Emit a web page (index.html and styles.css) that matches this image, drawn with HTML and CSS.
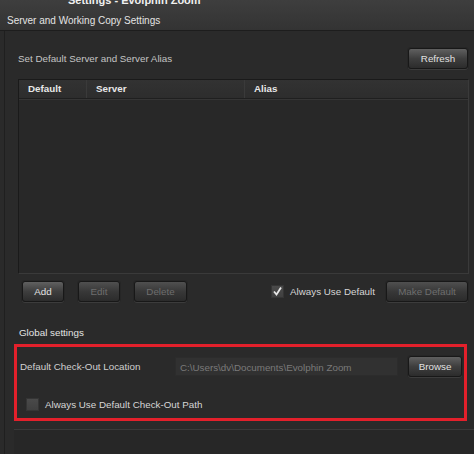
FILE: index.html
```html
<!DOCTYPE html>
<html lang="en">
<head>
  <meta charset="UTF-8">
  <title>Settings - Evolphin Zoom</title>
  <link rel="stylesheet" href="styles.css">
</head>
<body>

  <div class="header">
    <div class="title">Settings - Evolphin Zoom</div>
    <div class="section-label">Server and Working Copy Settings</div>
  </div>

  <div class="panel">
    <div class="row server-row">
      <span class="label">Set Default Server and Server Alias</span>
      <button class="btn refresh">Refresh</button>
    </div>

    <div class="table">
      <div class="thead">
        <div class="col col-default">Default</div>
        <div class="col col-server">Server</div>
        <div class="col col-alias">Alias</div>
      </div>
      <div class="tbody"></div>
    </div>

    <div class="row actions">
      <button class="btn add">Add</button>
      <button class="btn edit" disabled>Edit</button>
      <button class="btn delete" disabled>Delete</button>
      <label class="check always-default">
        <span class="box checked">
          <svg width="11" height="11" viewBox="0 0 11 11"><path d="M2 5.5 L4.5 8.5 L9 1.5" fill="none" stroke="#e8e8e8" stroke-width="1.8"/></svg>
        </span>
        Always Use Default
      </label>
      <button class="btn make-default" disabled>Make Default</button>
    </div>

    <div class="group-label">Global settings</div>

    <div class="global">
      <div class="row location">
        <span class="label">Default Check-Out Location</span>
        <div class="field">C:\Users\dv\Documents\Evolphin Zoom</div>
        <button class="btn browse">Browse</button>
      </div>
      <label class="check path">
        <span class="box"></span>
        Always Use Default Check-Out Path
      </label>
    </div>

    <div class="footer"></div>
  </div>

</body>
</html>
```

FILE: styles.css
```css
html, body {
  margin: 0;
  padding: 0;
  background: #2a2a2a;
  color: #d8d8d8;
  font-family: "Liberation Sans", Arial, sans-serif;
  font-size: 9.8px;
  width: 474px;
  height: 454px;
  overflow: hidden;
}

.header {
  display: flow-root;
  height: 30px;
  background: linear-gradient(#3e3e3e, #333333);
  border-bottom: 1px solid #1d1d1d;
  padding: 0 7px;
}
.title {
  margin-top: -6px;
  margin-left: 61px;
  height: 12px;
  line-height: 12px;
  font-weight: bold;
  font-size: 11px;
  color: #f0f0f0;
}
.section-label {
  margin-top: 8px;
  line-height: 14px;
  font-size: 10px;
  color: #e4e4e4;
}

.panel {
  margin-left: 4px;
  height: 423px;
  border-left: 1px solid #1f1f1f;
  background: #2a2a2a;
  padding-top: 17px;
  box-sizing: border-box;
}

.row {
  display: flex;
  align-items: center;
}
.server-row {
  justify-content: space-between;
  padding: 0 6px 0 13px;
}
.label {
  color: #c4c4c4;
}

.btn {
  font: inherit;
  height: 21px;
  padding: 0;
  border: 1px solid #181818;
  border-radius: 3px;
  background: linear-gradient(#606060, #3e3e3e 50%, #2c2c2c);
  color: #e2e2e2;
  box-shadow: 0 1px 0 #3c3c3c, 0 0 0 1px #262626;
}
.btn:disabled {
  color: #6e6e6e;
  background: linear-gradient(#505050, #383838 50%, #2b2b2b);
}
.refresh { width: 60px; }

.table {
  margin: 10px 5px 0 13px;
  height: 195px;
  border: 1px solid #1a1a1a;
  border-right-color: #3a3a3a;
  border-bottom-color: #3a3a3a;
  background: #282828;
  box-sizing: border-box;
  display: flex;
  flex-direction: column;
}
.thead {
  display: flex;
  height: 18px;
  background: linear-gradient(#323232, #2d2d2d);
  border-bottom: 1px solid #1f1f1f;
  box-shadow: 0 1px 0 #353535;
  font-weight: bold;
  color: #e8e8e8;
}
.col {
  line-height: 18px;
  padding-left: 9px;
  box-sizing: border-box;
}
.col-default { width: 68px; border-right: 1px solid #3a3a3a; }
.col-server { width: 158px; border-right: 1px solid #3a3a3a; }
.col-alias { flex: 1; }
.tbody { flex: 1; }

.actions {
  margin-top: 7px;
  padding-left: 17px;
  padding-right: 6px;
}
.add { width: 42px; }
.edit { width: 42px; margin-left: 14px; }
.delete { width: 53px; margin-left: 14px; }
.make-default { width: 82px; margin-left: auto; }

.check {
  display: flex;
  align-items: center;
  color: #d6d6d6;
}
.box {
  width: 11px;
  height: 11px;
  background: linear-gradient(#4a4a4a, #404040);
  border: 1px solid #353535;
  margin-right: 6px;
  display: flex;
}
.always-default { margin-left: 84px; }

.group-label {
  margin: 24px 0 0 14px;
  line-height: 14px;
  color: #e4e4e4;
}

.global {
  margin: 4px 7px 0 9px;
  height: 77px;
  border: 3px solid #e3202b;
  box-sizing: border-box;
}
.location {
  margin-top: 9px;
  padding-left: 3px;
}
.location .label {
  width: 155px;
  color: #d0d0d0;
}
.field {
  width: 223px;
  height: 19px;
  line-height: 19px;
  padding-left: 4px;
  box-sizing: border-box;
  background: #313131;
  border: 1px solid #2c2c2c;
  color: #7a7a7a;
}
.browse { width: 54px; margin-left: 10px; }

.path {
  margin: 21px 0 0 9px;
}

.footer {
  margin: 8px 0 0 9px;
  border-top: 1px solid #3a3a3a;
  height: 26px;
  background: #272727;
}
```
